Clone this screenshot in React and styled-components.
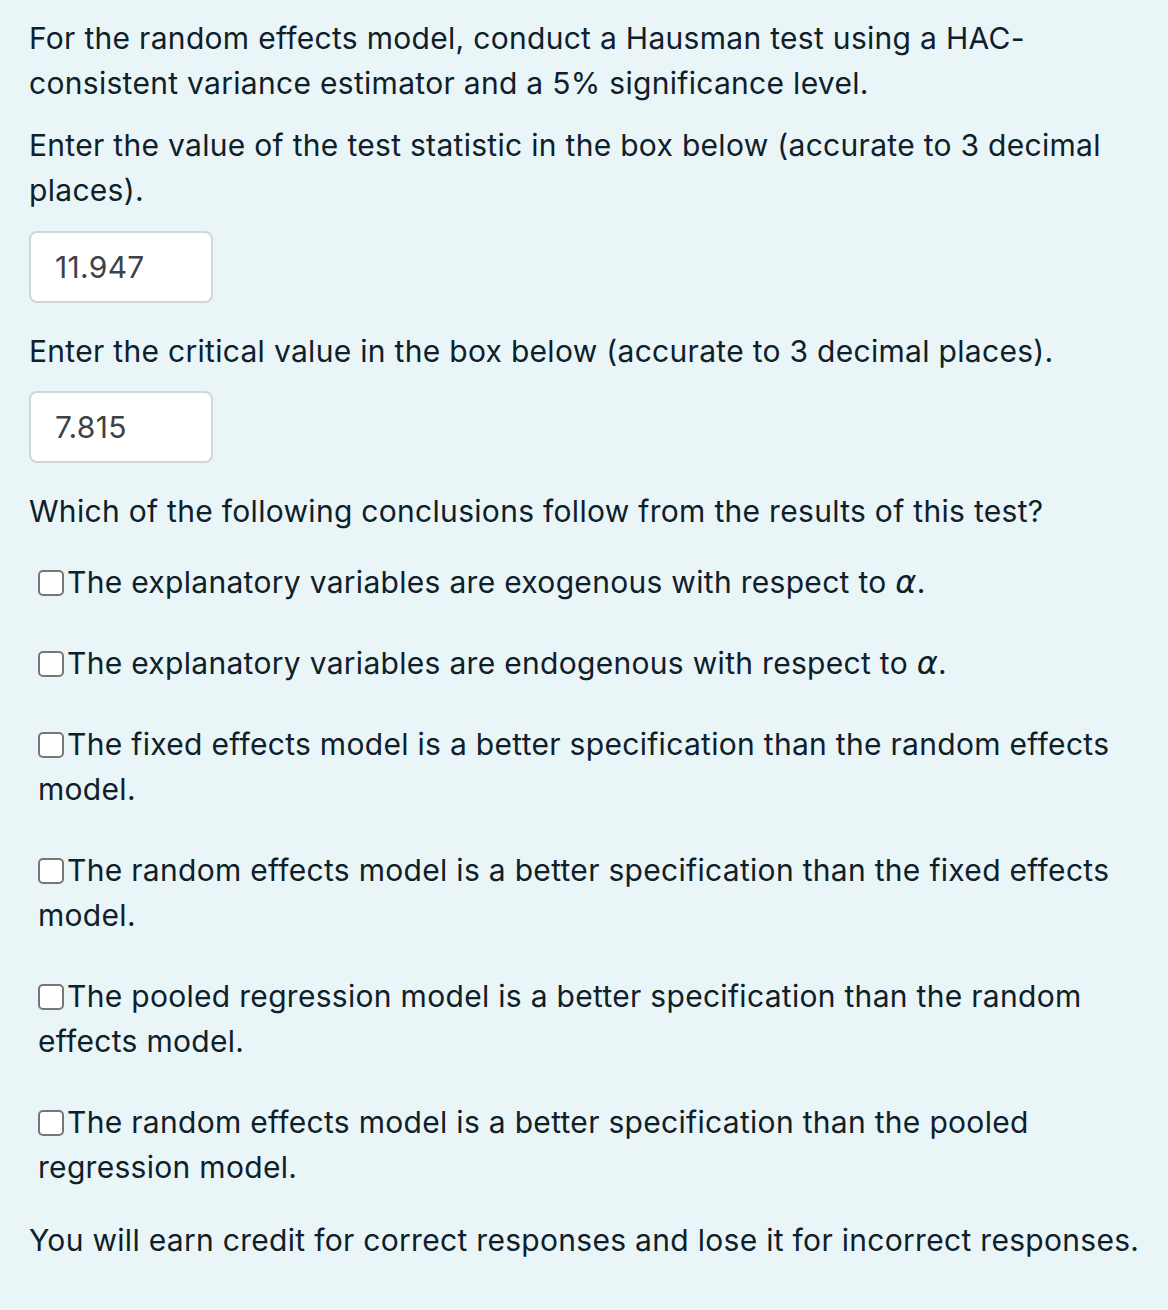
import React from "react";
import styled, { createGlobalStyle } from "styled-components";

const Global = createGlobalStyle`
  html, body { margin: 0; padding: 0; background: #eaf5f8; }
  body { font-family: Inter, "Noto Sans", sans-serif; color: #0e2029; }
`;

const Page = styled.div`
  padding: 16px 14px 40px 29px;
  font-size: 30px;
  line-height: 45px;
  letter-spacing: 0.3px;
`;

const P = styled.p`
  margin: 0 0 ${(p) => p.$mb ?? 17}px 0;
`;

const Field = styled.input`
  display: block;
  box-sizing: border-box;
  width: 184px;
  height: 72px;
  margin: 0 0 26px 0;
  padding: 0 24px;
  border: 2px solid #d0d6da;
  border-radius: 8px;
  background: #fff;
  font-family: Inter, "Noto Sans", sans-serif;
  font-size: 30px;
  letter-spacing: 0.3px;
  color: #3d4247;
  outline: none;
`;

const Options = styled.div`
  display: flex;
  flex-direction: column;
  gap: 36px;
  margin: 26px 0 28px 0;
  padding-left: 9px;
`;

const Option = styled.label`
  display: block;
`;

const Box = styled.input`
  appearance: none;
  -webkit-appearance: none;
  box-sizing: border-box;
  width: 26px;
  height: 26px;
  margin: 0 3px 0 0;
  border: 2px solid #777;
  border-radius: 5px;
  background: #fff;
  vertical-align: -3px;
`;

const Alpha = styled.i`
  font-style: italic;
  font-family: "DejaVu Sans", sans-serif;
  font-size: 32px;
`;

const options = [
  <>The explanatory variables are exogenous with respect to <Alpha>α</Alpha>.</>,
  <>The explanatory variables are endogenous with respect to <Alpha>α</Alpha>.</>,
  "The fixed effects model is a better specification than the random effects model.",
  "The random effects model is a better specification than the fixed effects model.",
  "The pooled regression model is a better specification than the random effects model.",
  "The random effects model is a better specification than the pooled regression model.",
];

export default function App() {
  return (
    <>
      <Global />
      <Page>
        <P>
          For the random effects model, conduct a Hausman test using a HAC-consistent variance
          estimator and a 5% significance level.
        </P>
        <P $mb={18}>Enter the value of the test statistic in the box below (accurate to 3 decimal places).</P>
        <Field defaultValue="11.947" />
        <P>Enter the critical value in the box below (accurate to 3 decimal places).</P>
        <Field defaultValue="7.815" />
        <P $mb={0}>Which of the following conclusions follow from the results of this test?</P>
        <Options>
          {options.map((o, i) => (
            <Option key={i}>
              <Box type="checkbox" />
              {o}
            </Option>
          ))}
        </Options>
        <P>You will earn credit for correct responses and lose it for incorrect responses.</P>
      </Page>
    </>
  );
}
